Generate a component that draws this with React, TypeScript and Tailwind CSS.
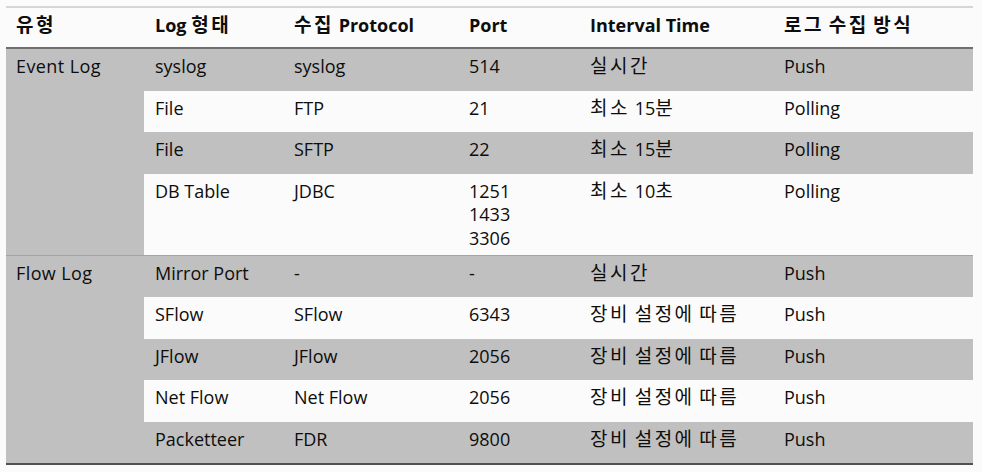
const rows = [
  { form: 'syslog', proto: 'syslog', port: ['514'], interval: '실시간', method: 'Push' },
  { form: 'File', proto: 'FTP', port: ['21'], interval: '최소 15분', method: 'Polling' },
  { form: 'File', proto: 'SFTP', port: ['22'], interval: '최소 15분', method: 'Polling' },
  { form: 'DB Table', proto: 'JDBC', port: ['1251', '1433', '3306'], interval: '최소 10초', method: 'Polling' },
];

const flowRows = [
  { form: 'Mirror Port', proto: '-', port: ['-'], interval: '실시간', method: 'Push' },
  { form: 'SFlow', proto: 'SFlow', port: ['6343'], interval: '장비 설정에 따름', method: 'Push' },
  { form: 'JFlow', proto: 'JFlow', port: ['2056'], interval: '장비 설정에 따름', method: 'Push' },
  { form: 'Net Flow', proto: 'Net Flow', port: ['2056'], interval: '장비 설정에 따름', method: 'Push' },
  { form: 'Packetteer', proto: 'FDR', port: ['9800'], interval: '장비 설정에 따름', method: 'Push' },
];

type Row = (typeof rows)[number];

// hangul gets a little extra size/spacing, like the wide Korean face in the original
function Txt({ s }: { s: string }) {
  const parts = s.split(/([\uAC00-\uD7A3]+)/).filter(Boolean);
  return (
    <>
      {parts.map((p, i) =>
        /[\uAC00-\uD7A3]/.test(p) ? (
          <span key={i} className="text-[19px] tracking-[2.5px]">
            {p}
          </span>
        ) : (
          <span key={i}>{p}</span>
        ),
      )}
    </>
  );
}

function DataRow({ row, gray, tall }: { row: Row; gray: boolean; tall?: boolean }) {
  const bg = gray ? 'bg-[#c0c0c0]' : 'bg-[#fbfbfb]';
  const h = tall ? 'h-[81px]' : 'h-[41.5px]';
  const cells = [row.form, row.proto, row.port, row.interval, row.method];
  return (
    <div className={`grid grid-cols-[139px_175px_121px_194px_200px] ${bg} ${h}`}>
      {cells.map((c, i) => (
        <div key={i} className="pl-[11px] pt-[6px] leading-[23.5px] whitespace-nowrap">
          {Array.isArray(c) ? c.map((p) => <div key={p}>{p}</div>) : <Txt s={c} />}
        </div>
      ))}
    </div>
  );
}

export default function App() {
  return (
    <div
      className="min-h-screen bg-[#fbfbfb] pt-[6px] pl-[6px] text-[18px] text-[#0d0d0d]"
      style={{ fontFamily: '"Open Sans", "Noto Sans CJK KR", sans-serif' }}
    >
      <div className="w-[967px] border-t-2 border-[#d6d6d6]">
        <div className="grid grid-cols-[138px_139px_175px_121px_194px_200px] h-[41px] border-b-2 border-[#6f6f6f] font-bold">
          {['유형', 'Log 형태', '수집 Protocol', 'Port', 'Interval Time', '로그 수집 방식'].map((h, i) => (
            <div key={h} className={`${i === 0 ? 'pl-[10px]' : 'pl-[11px]'} pt-[5px] leading-[24px] whitespace-nowrap`}>
              <Txt s={h} />
            </div>
          ))}
        </div>

        <div className="grid grid-cols-[138px_829px] border-b border-[#a4a4a4]">
          <div className="bg-[#c0c0c0] pl-[10px] pt-[6px] leading-[23.5px] tracking-[0.4px]">Event Log</div>
          <div>
            {rows.map((r, i) => (
              <DataRow key={i} row={r} gray={i % 2 === 0} tall={i === 3} />
            ))}
          </div>
        </div>

        <div className="grid grid-cols-[138px_829px] border-b-2 border-[#505050]">
          <div className="bg-[#c0c0c0] pl-[10px] pt-[6px] leading-[23.5px] tracking-[0.4px]">Flow Log</div>
          <div>
            {flowRows.map((r, i) => (
              <DataRow key={i} row={r} gray={i % 2 === 0} />
            ))}
          </div>
        </div>
      </div>
    </div>
  );
}
